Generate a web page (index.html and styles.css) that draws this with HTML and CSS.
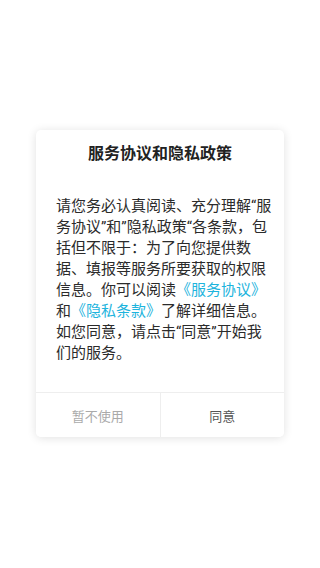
FILE: index.html
```html
<!DOCTYPE html>
<html lang="zh-CN">
<head>
  <meta charset="UTF-8">
  <meta name="viewport" content="width=device-width, initial-scale=1.0">
  <title>服务协议和隐私政策</title>
  <link rel="stylesheet" href="styles.css">
</head>
<body>

  <div class="dialog">
    <h2 class="dialog-title">服务协议和隐私政策</h2>

    <div class="dialog-body">
      <p>请您务必认真阅读、充分理解“服务协议”和”隐私政策“各条款，包括但不限于：为了向您提供数据、填报等服务所要获取的权限信息。你可以阅读<a href="#" class="link">《服务协议》</a>和<a href="#" class="link">《隐私条款》</a>了解详细信息。如您同意，请点击“同意”开始我们的服务。</p>
    </div>

    <div class="dialog-actions">
      <button class="btn-cancel">暂不使用</button>
      <button class="btn-ok">同意</button>
    </div>
  </div>

</body>
</html>
```

FILE: styles.css
```css
body {
  font-family: Roboto, "Noto Sans CJK SC", sans-serif;
  background-color: #fff;
  color: #333;
  margin: 0;
  padding: 0;
  display: flex;
  flex-direction: column;
  align-items: center;
  min-height: 100vh;
}

.dialog {
  width: 248px;
  margin-top: 130px;
  background: #fff;
  border-radius: 5px;
  box-shadow: 0 1px 10px rgba(0, 0, 0, 0.12);
  overflow: hidden;
}

.dialog-title {
  margin: 0;
  padding-top: 12px;
  font-size: 16px;
  line-height: 24px;
  font-weight: bold;
  color: #222;
  text-align: center;
}

.dialog-body {
  padding: 30px 12px 28px 20px;
}

.dialog-body p {
  margin: 0;
  font-size: 15px;
  line-height: 21px;
  color: #2b2b2b;
}

.link {
  color: #1db4dd;
  text-decoration: none;
}

.dialog-actions {
  display: flex;
  border-top: 1px solid #eee;
}

.dialog-actions button {
  flex: 1;
  height: 44px;
  font-family: inherit;
  font-size: 13px;
  background: #fff;
  border: none;
  cursor: pointer;
}

.btn-cancel {
  color: #aaa;
  border-right: 1px solid #eee !important;
}

.btn-ok {
  color: #555;
}
```
